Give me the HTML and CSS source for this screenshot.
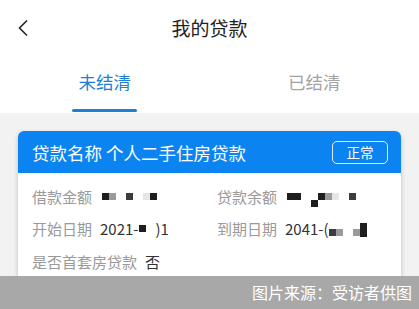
FILE: index.html
```html
<!DOCTYPE html>
<html lang="zh-CN">
<head>
    <meta charset="UTF-8">
    <meta name="viewport" content="width=device-width, initial-scale=1.0">
    <title>我的贷款</title>
    <link rel="stylesheet" href="styles.css">
</head>
<body>
    <div class="nav">
        <span class="back">
            <svg width="12" height="18" viewBox="0 0 12 18"><path d="M10 1.5 L2.5 9 L10 16.5" fill="none" stroke="#222" stroke-width="1.6"/></svg>
        </span>
        <h1 class="title">我的贷款</h1>
        <span></span>
    </div>

    <div class="tabs">
        <div class="tab active"><span>未结清</span><i class="bar"></i></div>
        <div class="tab"><span>已结清</span></div>
    </div>

    <div class="content">
        <div class="card">
            <div class="card-head">
                <span class="loan-name">贷款名称 个人二手住房贷款</span>
                <span class="badge">正常</span>
            </div>
            <div class="card-body">
                <div class="item">
                    <span class="label">借款金额</span>
                    <span class="mosaic">
                        <i class="px d"></i><i class="px g"></i><i class="sp"></i><i class="px d2"></i><i class="sp"></i><i class="px l"></i><i class="px d"></i>
                    </span>
                </div>
                <div class="item">
                    <span class="label">贷款余额</span>
                    <span class="mosaic">
                        <i class="px d wide"></i><i class="sp"></i><i class="px d low"></i><i class="px d"></i><i class="px g"></i><i class="px l"></i><i class="sp"></i><i class="px d2"></i>
                    </span>
                </div>
                <div class="item">
                    <span class="label">开始日期</span>
                    <span class="value">2021-<i class="px d"></i><i class="sp"></i>)1</span>
                </div>
                <div class="item">
                    <span class="label">到期日期</span>
                    <span class="value">2041-(<i class="px d2 drop"></i><i class="px g drop"></i><i class="sp"></i><i class="px g drop"></i><i class="px d tall"></i></span>
                </div>
                <div class="item full">
                    <span class="label">是否首套房贷款</span>
                    <span class="value">否</span>
                </div>
            </div>
        </div>
    </div>

    <div class="caption">图片来源：受访者供图</div>
</body>
</html>
```

FILE: styles.css
```css
body {
    margin: 0;
    width: 419px;
    height: 309px;
    overflow: hidden;
    position: relative;
    background-color: #f2f2f2;
    font-family: "Noto Sans CJK SC", "Noto Sans", sans-serif;
    color: #222;
}

.nav {
    display: grid;
    grid-template-columns: 60px 1fr 60px;
    align-items: center;
    height: 54px;
    background-color: #fff;
}

.back {
    display: flex;
    padding-left: 17px;
    padding-top: 1px;
}

.title {
    margin: 0;
    text-align: center;
    font-size: 19px;
    font-weight: normal;
    color: #222;
}

.tabs {
    display: flex;
    height: 59px;
    background-color: #fff;
}

.tab {
    flex: 1;
    display: flex;
    flex-direction: column;
    align-items: center;
    justify-content: flex-end;
    font-size: 17.5px;
    color: #a3a3a3;
}

.tab span {
    line-height: 24px;
    margin-bottom: 15px;
}

.tab.active {
    color: #1f7fd4;
}

.tab .bar {
    display: block;
    width: 65px;
    height: 3px;
    border-radius: 2px;
    background-color: #1f7fd4;
    margin-bottom: 1px;
}

.tab:not(.active) span {
    margin-bottom: 19px;
}

.content {
    padding: 18px 18px 0;
}

.card {
    border-radius: 6px;
    box-shadow: 0 2px 5px rgba(0, 0, 0, 0.22);
}

.card-head {
    display: flex;
    justify-content: space-between;
    align-items: center;
    height: 42px;
    padding: 0 13px 0 14px;
    background-color: #0b84f2;
    border-radius: 6px 6px 0 0;
    color: #fff;
}

.loan-name {
    font-size: 17.5px;
}

.badge {
    display: flex;
    align-items: center;
    justify-content: center;
    width: 54px;
    height: 21px;
    border: 1px solid rgba(255, 255, 255, 0.85);
    border-radius: 5px;
    font-size: 13.5px;
}

.card-body {
    display: grid;
    grid-template-columns: 185px 1fr;
    padding: 7px 14px 3px;
    background-color: #fff;
    border-radius: 0 0 6px 6px;
}

.item {
    display: flex;
    align-items: center;
    height: 32.5px;
    font-size: 15px;
}

.item.full {
    grid-column: 1 / 3;
}

.label {
    color: #9a9a9a;
    margin-right: 8px;
}

.value {
    display: flex;
    align-items: center;
    color: #333;
}

.mosaic {
    display: flex;
    align-items: center;
    margin-left: 2px;
}

.px {
    display: inline-block;
    width: 7px;
    height: 7px;
    background-color: #222;
}

.px.d { background-color: #1e1e1e; }
.px.d2 { background-color: #3c3c3c; }
.px.g { background-color: #9a9a9a; }
.px.l { background-color: #e6e6e6; }
.px.wide { width: 14px; }
.px.low { position: relative; top: 7px; }
.px.drop { position: relative; top: 4px; }
.px.tall { height: 14px; position: relative; top: 1px; }

.sp {
    display: inline-block;
    width: 10px;
}

.caption {
    position: absolute;
    left: 0;
    right: 0;
    bottom: 0;
    height: 33px;
    line-height: 33px;
    padding-right: 7px;
    text-align: right;
    background-color: #a8a8a8;
    color: #fff;
    font-size: 16px;
}
```
